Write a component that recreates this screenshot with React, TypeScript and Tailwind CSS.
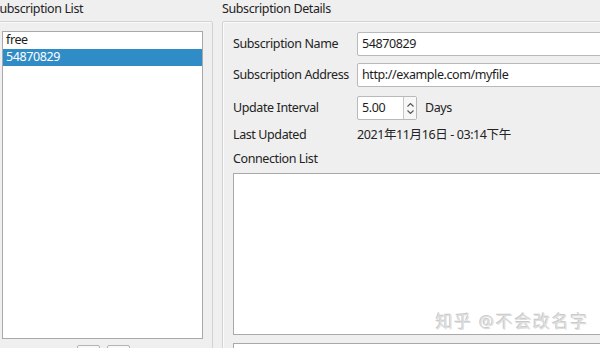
import React from "react";

const FONT = "font-['Noto_Sans','Noto_Sans_CJK_SC',sans-serif]";
const TXT = "text-[12.5px] tracking-[-0.4px]";

const FieldLabel: React.FC<{ children: React.ReactNode }> = ({ children }) => (
  <div className={`w-[124px] shrink-0 ${TXT} text-[#232323]`}>{children}</div>
);

const TextBox: React.FC<{ value: string }> = ({ value }) => (
  <div
    className={`flex h-[24px] flex-1 items-center rounded-[2px] border border-[#b9b9b9] bg-white pl-[4px] ${TXT} text-[#1d1d1d]`}
  >
    {value}
  </div>
);

const SpinBox: React.FC<{ value: string }> = ({ value }) => (
  <div className="flex h-[24px] w-[60px] rounded-[2px] border border-[#b9b9b9] bg-white">
    <div className={`flex flex-1 items-center pl-[4px] ${TXT} text-[#1d1d1d]`}>{value}</div>
    <div className="flex w-[13px] flex-col items-center justify-center gap-[3px] border-l border-[#c8c8c8] bg-[#f7f7f7]">
      <svg width="7" height="4" viewBox="0 0 7 4">
        <path d="M0.5 3.5 L3.5 0.5 L6.5 3.5" fill="none" stroke="#555" strokeWidth="1.1" />
      </svg>
      <svg width="7" height="4" viewBox="0 0 7 4">
        <path d="M0.5 0.5 L3.5 3.5 L6.5 0.5" fill="none" stroke="#555" strokeWidth="1.1" />
      </svg>
    </div>
  </div>
);

export default function App() {
  return (
    <div className={`flex h-[348px] w-[600px] items-start overflow-hidden bg-[#efefef] ${FONT}`}>
      {/* Subscription List */}
      <div className="ml-[-7px] flex w-[220px] shrink-0 flex-col">
        <div className={`flex h-[21px] shrink-0 items-center pb-[4px] leading-[16px] ${TXT} text-[#232323]`}>
          Subscription List
        </div>
        <div className="flex h-[360px] shrink-0 flex-col rounded-[2px] border border-[#d2d2d2] pl-[8px] pr-[9px] pt-[9px] shadow-[inset_1px_1px_0_#fafafa]">
          <div className={`h-[308px] shrink-0 border border-[#a9a9a9] bg-white ${TXT}`}>
            <div className="flex h-[17px] items-center pl-[3px] text-[#1d1d1d]">free</div>
            <div className="flex h-[17px] items-center bg-[#308cc6] pl-[3px] text-white">
              54870829
            </div>
          </div>
          <div className="mt-[6px] flex shrink-0 gap-[7px] pl-[75px]">
            <div className="h-[20px] w-[23px] rounded-[2px] border border-[#b4b4b4] bg-[#f8f8f8]" />
            <div className="h-[20px] w-[23px] rounded-[2px] border border-[#b4b4b4] bg-[#f8f8f8]" />
          </div>
        </div>
      </div>

      {/* Subscription Details */}
      <div className="ml-[9px] flex w-[420px] shrink-0 flex-col">
        <div className={`flex h-[21px] shrink-0 items-center pb-[4px] leading-[16px] ${TXT} text-[#232323]`}>
          Subscription Details
        </div>
        <div className="flex h-[400px] shrink-0 flex-col rounded-[2px] border border-[#d2d2d2] pl-[10px] pt-[10px] shadow-[inset_1px_1px_0_#fafafa]">
          <div className="flex shrink-0 items-center">
            <FieldLabel>Subscription Name</FieldLabel>
            <TextBox value="54870829" />
          </div>
          <div className="mt-[7px] flex shrink-0 items-center">
            <FieldLabel>Subscription Address</FieldLabel>
            <TextBox value="http://example.com/myfile" />
          </div>
          <div className="mt-[9px] flex shrink-0 items-center">
            <FieldLabel>Update Interval</FieldLabel>
            <SpinBox value="5.00" />
            <span className={`ml-[8px] ${TXT} text-[#232323]`}>Days</span>
          </div>
          <div className="mt-[5px] flex h-[20px] shrink-0 items-center">
            <FieldLabel>Last Updated</FieldLabel>
            <span className={`${TXT} text-[#232323]`}>2021年11月16日 - 03:14下午</span>
          </div>
          <div className={`mt-[4px] flex h-[20px] shrink-0 items-center ${TXT} text-[#232323]`}>
            Connection List
          </div>
          <div className="relative mt-[4px] h-[162px] shrink-0 border border-[#a9a9a9] bg-white">
            <span className="absolute left-[202px] top-[139px] text-[17px] leading-none tracking-[1.6px] text-[#dedede] [text-shadow:-1px_-1px_0_#c9c9c9]">
              知乎 @不会改名字
            </span>
          </div>
          <div className="mt-[8px] h-[40px] shrink-0 border border-[#a9a9a9] bg-white" />
        </div>
      </div>
    </div>
  );
}
